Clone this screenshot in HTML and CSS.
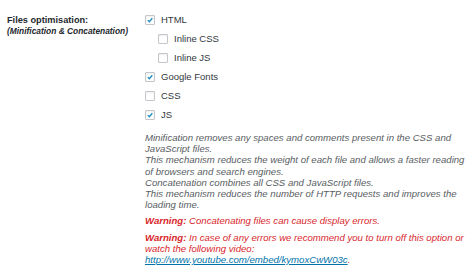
FILE: index.html
```html
<!DOCTYPE html>
<html lang="en">
<head>
  <meta charset="UTF-8">
  <title>Files optimisation</title>
  <link rel="stylesheet" href="styles.css">
</head>
<body>
  <div class="form-row">
    <div class="form-label">
      <div class="label-title">Files optimisation:</div>
      <div class="label-sub">(Minification &amp; Concatenation)</div>
    </div>

    <div class="form-field">
      <label class="option">
        <span class="box checked"><svg viewBox="0 0 10 10"><path d="M2.2 5.2 L4.2 7.2 L7.9 2.8"/></svg></span>
        HTML
      </label>
      <label class="option sub-option">
        <span class="box"></span>
        Inline CSS
      </label>
      <label class="option sub-option">
        <span class="box"></span>
        Inline JS
      </label>
      <label class="option">
        <span class="box checked"><svg viewBox="0 0 10 10"><path d="M2.2 5.2 L4.2 7.2 L7.9 2.8"/></svg></span>
        Google Fonts
      </label>
      <label class="option">
        <span class="box"></span>
        CSS
      </label>
      <label class="option">
        <span class="box checked"><svg viewBox="0 0 10 10"><path d="M2.2 5.2 L4.2 7.2 L7.9 2.8"/></svg></span>
        JS
      </label>

      <p class="description">
        Minification removes any spaces and comments present in the CSS and JavaScript files.<br>
        This mechanism reduces the weight of each file and allows a faster reading of browsers and search engines.<br>
        Concatenation combines all CSS and JavaScript files.<br>
        This mechanism reduces the number of HTTP requests and improves the loading time.
      </p>
      <p class="description warning"><strong>Warning:</strong> Concatenating files can cause display errors.</p>
      <p class="description warning"><strong>Warning:</strong> In case of any errors we recommend you to turn off this option or watch the following video:<br><a href="#">http://www.youtube.com/embed/kymoxCwW03c</a>.</p>
    </div>
  </div>
</body>
</html>
```

FILE: styles.css
```css
body {
  margin: 0;
  background: #fff;
  font-family: 'Liberation Sans', Arial, sans-serif;
  color: #32373c;
}

.form-row {
  display: grid;
  grid-template-columns: 145px 1fr;
  padding-top: 10px;
}

.form-label {
  padding-left: 7px;
  padding-top: 4px;
  color: #23282d;
}

.label-title {
  font-size: 9.2px;
  font-weight: bold;
  line-height: 12px;
}

.label-sub {
  font-size: 8.4px;
  font-weight: bold;
  font-style: italic;
  line-height: 11px;
}

.form-field {
  padding-right: 8px;
}

.option {
  display: flex;
  align-items: center;
  gap: 6px;
  height: 19px;
  font-size: 9.5px;
  color: #32373c;
}

.sub-option {
  padding-left: 13px;
}

.box {
  width: 10px;
  height: 10px;
  box-sizing: border-box;
  border: 1px solid #c3c7cb;
  border-radius: 1px;
  background: #fff;
  box-shadow: inset 0 1px 2px rgba(0, 0, 0, 0.07);
  display: flex;
}

.box svg {
  width: 8px;
  height: 8px;
  fill: none;
  stroke: #1e8cbe;
  stroke-width: 1.6;
}

.description {
  margin: 8px 0 0;
  font-size: 9.6px;
  font-style: italic;
  line-height: 11.2px;
  color: #585d62;
}

.warning {
  margin-top: 5px;
  color: #d9262c;
}

.warning a {
  color: #0073aa;
}
```
